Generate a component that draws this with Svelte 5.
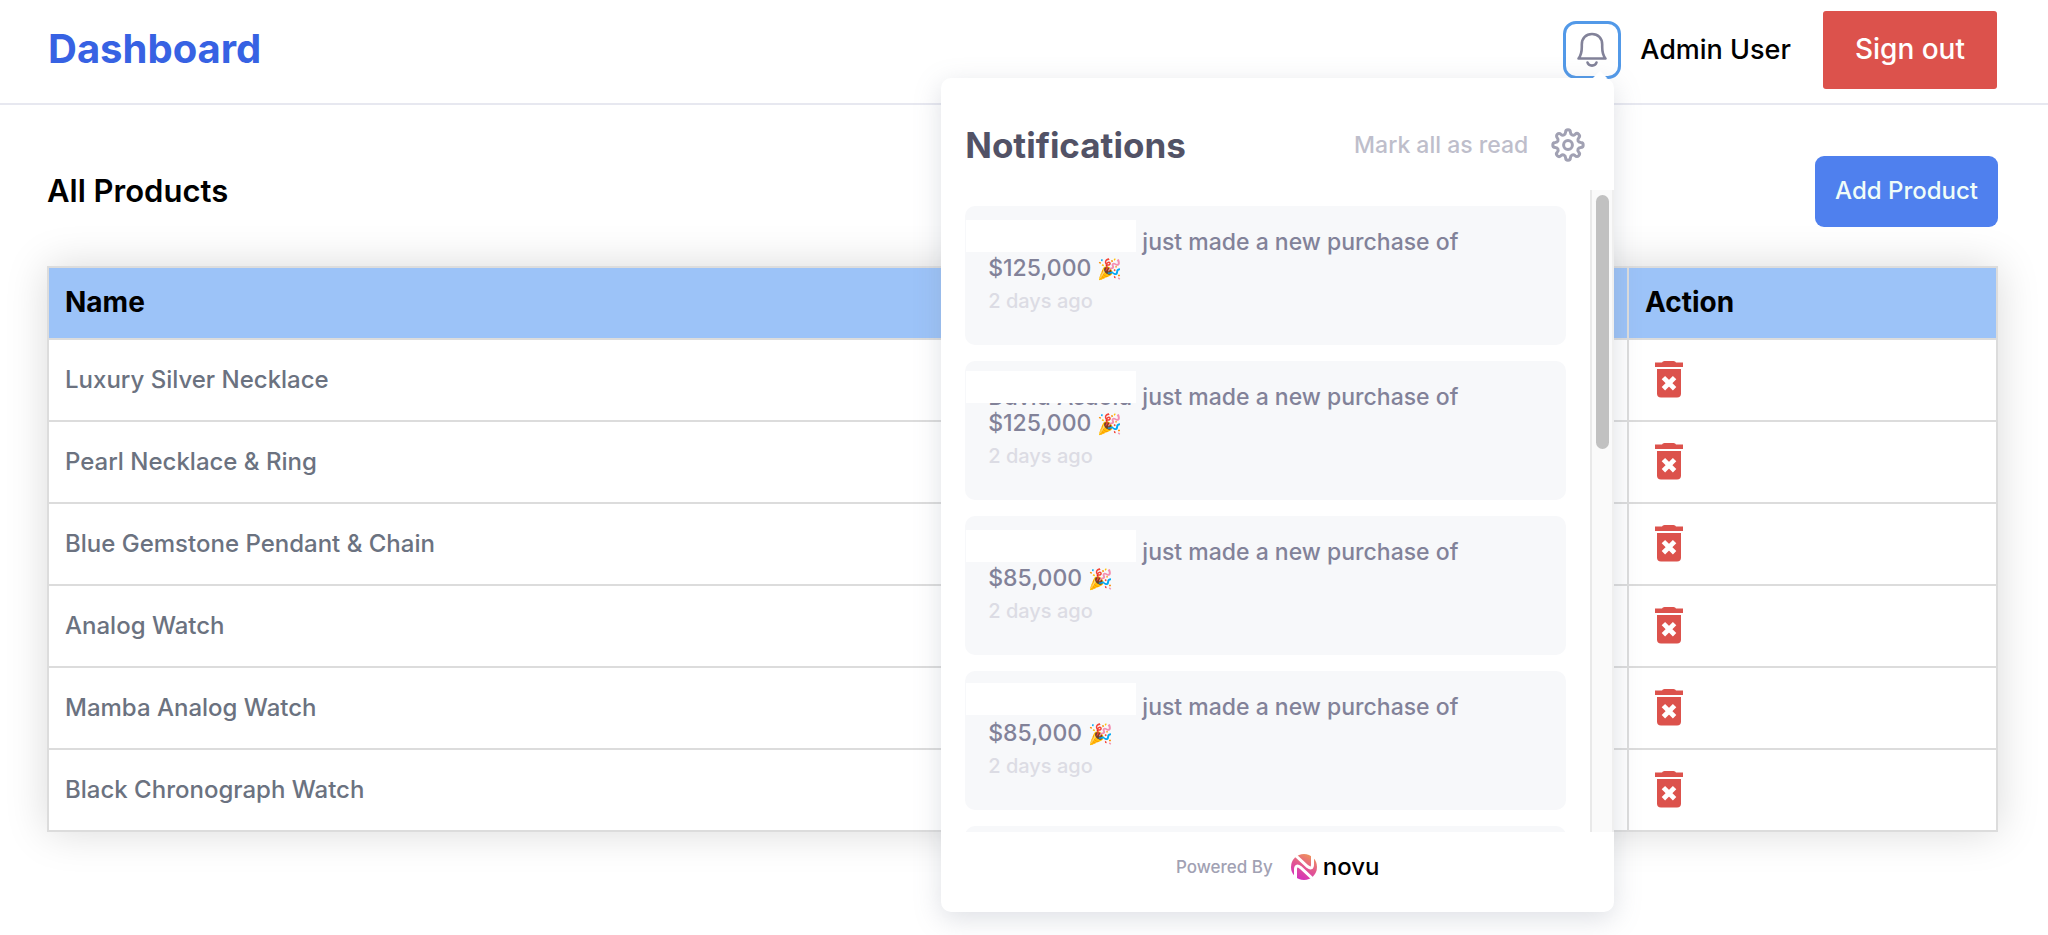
<script>

let open = true

let products = [
    "Luxury Silver Necklace",
    "Pearl Necklace & Ring",
    "Blue Gemstone Pendant & Chain",
    "Analog Watch",
    "Mamba Analog Watch",
    "Black Chronograph Watch"
]

// cover = distance from the top of the card to the white patch over the name
let notifications = [
    { name: "", amount: "$125,000", time: "2 days ago", cover: 14 },
    { name: "David Asaolu", amount: "$125,000", time: "2 days ago", cover: 10 },
    { name: "", amount: "$85,000", time: "2 days ago", cover: 14 },
    { name: "", amount: "$85,000", time: "2 days ago", cover: 12 }
]

function remove(product) {
    products = products.filter(p => p !== product)
}

</script>

<header>
    <h1>Dashboard</h1>
    <div class="user">
        <div class="bell-wrap">
            <button class="bell" aria-label="Notifications" on:click={() => { open = !open }}>
                <svg viewBox="0 0 32 36">
                    <path d="M2.5 26.5 C5 23.5 5.8 20 5.8 15 V12.5 C5.8 6.3 10 2 16 2 S26.2 6.3 26.2 12.5 V15 C26.2 20 27 23.5 29.5 26.5 Z"></path>
                    <path d="M11.5 30.5 C12.6 34.6 19.4 34.6 20.5 30.5"></path>
                </svg>
            </button>
            {#if open}
                <div class="popover">
                    <div class="arrow"></div>
                    <div class="popover-head">
                        <h2>Notifications</h2>
                        <button class="mark">Mark all as read</button>
                        <button class="settings" aria-label="Settings">
                            <svg viewBox="0 0 32 32">
                                <path d="M13.6 3.2 a2.4 2.4 0 0 1 4.8 0 c.2 2.8 2.6 3.9 4.7 2.1 a2.4 2.4 0 0 1 3.6 3.6 c-1.8 2.1 -.7 4.5 2.1 4.7 a2.4 2.4 0 0 1 0 4.8 c-2.8 .2 -3.9 2.6 -2.1 4.7 a2.4 2.4 0 0 1 -3.6 3.6 c-2.1 -1.8 -4.5 -.7 -4.7 2.1 a2.4 2.4 0 0 1 -4.8 0 c-.2 -2.8 -2.6 -3.9 -4.7 -2.1 a2.4 2.4 0 0 1 -3.6 -3.6 c1.8 -2.1 .7 -4.5 -2.1 -4.7 a2.4 2.4 0 0 1 0 -4.8 c2.8 -.2 3.9 -2.6 2.1 -4.7 a2.4 2.4 0 0 1 3.6 -3.6 c2.1 1.8 4.5 .7 4.7 -2.1 Z"></path>
                                <circle cx="16" cy="16" r="4.4"></circle>
                            </svg>
                        </button>
                    </div>
                    <div class="feed">
                        <ul>
                            {#each notifications as item}
                                <li>
                                    <p class="message"><span class="name">{item.name}</span> just made a new purchase of</p>
                                    <p class="message">{item.amount}<span class="emoji">🎉</span></p>
                                    <p class="time">{item.time}</p>
                                    <div class="cover" style="top: {item.cover}px"></div>
                                </li>
                            {/each}
                            <li></li>
                        </ul>
                        <div class="track"><div class="thumb"></div></div>
                    </div>
                    <div class="powered">
                        <span>Powered By</span>
                        <a href="#novu">
                            <svg viewBox="0 0 26 26">
                                <defs>
                                    <linearGradient id="novu-fill" x1="0.3" y1="1" x2="0.8" y2="0">
                                        <stop offset="0" stop-color="#d52ec0"></stop>
                                        <stop offset="0.5" stop-color="#e2588f"></stop>
                                        <stop offset="1" stop-color="#f19a55"></stop>
                                    </linearGradient>
                                </defs>
                                <circle cx="13" cy="13" r="13" fill="url(#novu-fill)"></circle>
                                <path d="M4 1 L16.5 12.5 Q21 16 21.5 11 V2"></path>
                                <path d="M22 25 L9.5 13.5 Q5 10 4.5 15 V24"></path>
                            </svg>
                            novu
                        </a>
                    </div>
                </div>
            {/if}
        </div>
        <span class="user-name">Admin User</span>
        <button class="sign-out">Sign out</button>
    </div>
</header>

<main>
    <div class="title-row">
        <h3>All Products</h3>
        <button class="add">Add Product</button>
    </div>
    <table>
        <thead>
            <tr>
                <th>Name</th>
                <th class="action">Action</th>
            </tr>
        </thead>
        <tbody>
            {#each products as product}
                <tr>
                    <td>{product}</td>
                    <td class="action">
                        <button class="delete" aria-label="Delete {product}" on:click={() => remove(product)}>
                            <svg viewBox="0 0 30 38">
                                <path d="M8 2.5 Q8.5 1 10.5 1 H19.5 Q21.5 1 22 2.5 H29 V7 H1 V2.5 Z"></path>
                                <path d="M3 9 H27 V33.5 Q27 37.5 23 37.5 H7 Q3 37.5 3 33.5 Z"></path>
                                <path class="cross" d="M9.4 17.6 L20.6 28.8 M20.6 17.6 L9.4 28.8"></path>
                            </svg>
                        </button>
                    </td>
                </tr>
            {/each}
        </tbody>
    </table>
</main>

<style>
:global(body) {
    background: white;
    color: black;
    font-family: Inter, "Noto Sans", sans-serif;
}
:global(#app) {
    min-height: 100vh;
}
h1, h2, h3, p, ul {
    margin: 0;
    padding: 0;
}
button {
    font-family: inherit;
    border: none;
    background: none;
    padding: 0;
    cursor: pointer;
}
svg {
    display: block;
}
header {
    display: flex;
    justify-content: space-between;
    align-items: center;
    padding: 11px 51px 14px 48px;
    border-bottom: 2px solid #e7e8f0;
}
h1 {
    padding-bottom: 2px;
    color: #3762e3;
    font-size: 40px;
    line-height: 48px;
    font-weight: 700;
}
.user {
    display: flex;
    align-items: center;
}
.bell-wrap {
    position: relative;
}
.bell {
    display: flex;
    align-items: center;
    justify-content: center;
    width: 58px;
    height: 58px;
    border: 3px solid #5299e8;
    border-radius: 13px;
}
.bell svg {
    width: 32px;
    height: 36px;
    fill: none;
    stroke: #828299;
    stroke-width: 2.6;
    stroke-linejoin: round;
    stroke-linecap: round;
}
.user-name {
    margin: 0 32px 0 19px;
    padding-bottom: 2px;
    font-size: 27px;
    font-weight: 500;
}
.sign-out {
    padding: 21px 32px 23px;
    border-radius: 3px;
    background: #dc524c;
    color: white;
    font-size: 28px;
    line-height: 34px;
    font-weight: 500;
}
.popover {
    position: absolute;
    top: 57px;
    right: 7px;
    z-index: 10;
    width: 673px;
    border-radius: 10px;
    background: white;
    box-shadow: 0 7px 27px rgba(122, 133, 153, 0.25);
}
.arrow {
    position: absolute;
    top: -5px;
    right: 9px;
    width: 10px;
    height: 10px;
    background: white;
    transform: rotate(45deg);
}
.popover-head {
    display: flex;
    align-items: center;
    padding: 50px 30px 28px 24px;
}
h2 {
    flex: 1;
    color: #525266;
    font-size: 35px;
    line-height: 34px;
    font-weight: 700;
}
.mark {
    color: #bebecb;
    font-size: 23px;
    line-height: 28px;
    font-weight: 500;
}
.settings {
    margin-left: 24px;
}
.settings svg {
    width: 32px;
    height: 32px;
    fill: none;
    stroke: #a1a1b3;
    stroke-width: 3;
    stroke-linejoin: round;
    overflow: visible;
}
.feed {
    display: flex;
    height: 642px;
}
ul {
    flex: 1;
    overflow: hidden;
    padding: 16px 24px 0;
    list-style: none;
}
li {
    position: relative;
    box-sizing: border-box;
    height: 139px;
    margin-bottom: 16px;
    padding: 23px;
    border-radius: 10px;
    background: #f7f8fa;
}
.message {
    color: #828299;
    font-size: 23px;
    line-height: 26px;
    font-weight: 500;
}
.name {
    display: inline-block;
    width: 148px;
    white-space: nowrap;
}
.emoji {
    margin-left: 6px;
    font-size: 20px;
}
.time {
    margin-top: 6px;
    color: #dcdce4;
    font-size: 20px;
    line-height: 26px;
    font-weight: 500;
}
.cover {
    position: absolute;
    left: 1px;
    width: 170px;
    height: 32px;
    background: white;
}
.track {
    box-sizing: border-box;
    width: 24px;
    padding: 5px 4px;
    border-left: 2px solid #e9e9e9;
    border-right: 2px solid #efefef;
    background: #fafafa;
}
.thumb {
    width: 13px;
    height: 254px;
    border-radius: 7px;
    background: #c1c1c1;
}
.powered {
    display: flex;
    align-items: center;
    justify-content: center;
    gap: 18px;
    height: 80px;
    padding-bottom: 10px;
    box-sizing: border-box;
    color: #a1a1b3;
    font-size: 17px;
    font-weight: 500;
}
.powered a {
    display: flex;
    align-items: center;
    gap: 6px;
    color: black;
    font-size: 24px;
    line-height: 26px;
    font-weight: 500;
    text-decoration: none;
}
.powered svg {
    width: 26px;
    height: 26px;
}
.powered path {
    fill: none;
    stroke: white;
    stroke-width: 3;
}
main {
    padding: 51px 50px 32px 47px;
}
.title-row {
    display: flex;
    justify-content: space-between;
    align-items: center;
    margin-bottom: 39px;
}
h3 {
    padding-bottom: 2px;
    font-size: 31px;
    line-height: 36px;
    font-weight: 600;
}
.add {
    padding: 19px 20px 21px;
    border-radius: 9px;
    background: #4f80ee;
    color: #f0fdf8;
    font-size: 24px;
    line-height: 31px;
    font-weight: 500;
}
table {
    width: 100%;
    border-collapse: collapse;
    box-shadow: 0 0 40px rgba(0, 0, 0, 0.15);
}
th, td {
    box-sizing: border-box;
    padding: 0 16px 2px;
    border: 2px solid #dcdcdc;
    text-align: left;
}
th {
    height: 72px;
    background: #9cc3f8;
    font-size: 28px;
    font-weight: 700;
}
td {
    height: 82px;
    background: white;
    color: #6b7280;
    font-size: 24px;
    font-weight: 500;
}
.action {
    width: 369px;
}
.delete {
    display: block;
    margin-left: 9px;
}
.delete svg {
    width: 30px;
    height: 38px;
    fill: #dc524c;
}
.cross {
    stroke: white;
    stroke-width: 4.8;
}
</style>
